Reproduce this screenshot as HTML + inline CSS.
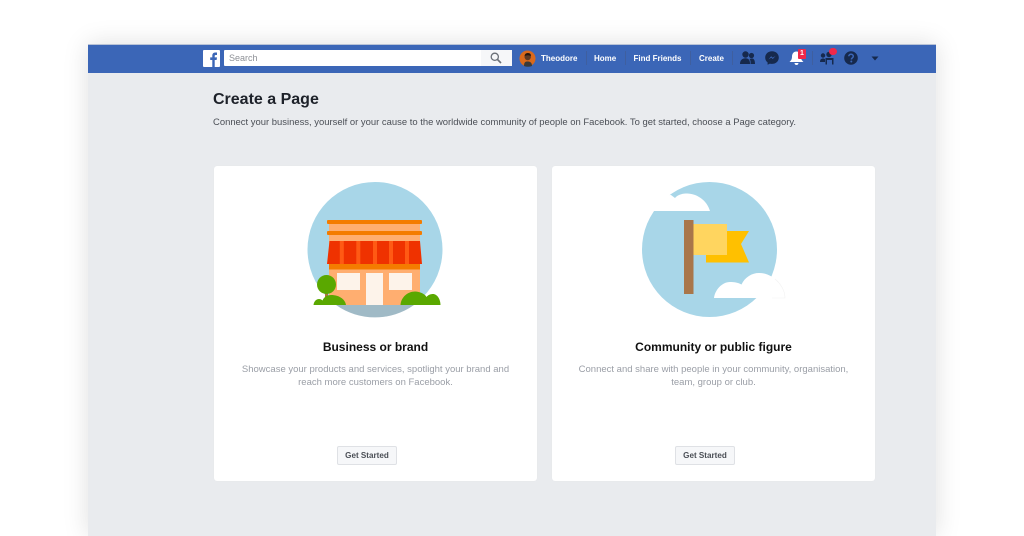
<!DOCTYPE html>
<html><head><meta charset="utf-8"><style>
html,body{margin:0;padding:0;background:#fff;width:1024px;height:536px;overflow:hidden}
body{position:relative;font-family:"Liberation Sans",Arial,sans-serif}
#all{position:absolute;left:0;top:0;width:1024px;height:536px;filter:blur(.35px)}
.abs,.t{position:absolute}
.t{white-space:nowrap}
#win{position:absolute;left:88px;top:44px;width:848px;height:492px;background:#e9ebee;box-shadow:0 0 24px rgba(0,0,0,.13)}
#bar{position:absolute;left:88px;top:44px;width:848px;height:29px;background:#3b66b7;border-top:1px solid #b9c3d6;box-sizing:border-box}
.nav{font-size:8px;font-weight:bold;color:#fff;top:53.500px;line-height:10px}
.sep{position:absolute;top:51px;width:1px;height:14px;background:#3f5f9f}
.card{position:absolute;top:166px;width:323px;height:315px;background:#fff;border-radius:3px;box-shadow:0 0 1px rgba(0,0,0,.06)}
.h{font-size:12px;font-weight:bold;color:#111;text-align:center;top:339.500px;line-height:14px}
.d{font-size:9.500px;color:#9a9ea6;text-align:center;line-height:13.500px;top:362.500px}
.b{position:absolute;top:446px;width:60px;height:19px;box-sizing:border-box;background:#f6f7f9;border:1px solid #dfe1e5;border-radius:2px;font-size:8.100px;font-weight:bold;color:#4b4f56;text-align:center;line-height:17px}
</style></head><body><div id="all">
<div id="win"></div>
<div id="bar"></div>

<div class="abs" style="left:203px;top:50px;width:17px;height:17px;background:#fff;border-radius:1px"></div>
<svg class="abs" style="left:203px;top:50px" width="17" height="17" viewBox="0 0 17 17"><path d="M9.300 17V10H7.200V7.400H9.300V5.600C9.300 3.500 10.600 2.500 12.400 2.500H14V5H12.800C11.900 5 11.700 5.400 11.700 6V7.400H14L13.600 10H11.700V17Z" fill="#3b66b7"/></svg>
<div class="abs" style="left:224px;top:50px;width:288px;height:16px;background:#fff;border-radius:1px"></div>
<div class="abs" style="left:481px;top:50px;width:31px;height:16px;background:#f6f7f9"></div>
<div class="t" style="left:229px;top:53px;font-size:9px;line-height:11px;color:#8d9096">Search</div>
<svg class="abs" style="left:490px;top:52px" width="12" height="12" viewBox="0 0 12 12"><circle cx="4.800" cy="4.800" r="3.600" fill="none" stroke="#6b7078" stroke-width="1.300"/><path d="M7.500 7.500L11 11" stroke="#6b7078" stroke-width="1.600"/></svg>

<svg class="abs" style="left:519px;top:50px" width="17" height="17" viewBox="0 0 17 17"><circle cx="8.500" cy="8.500" r="8" fill="#d9691c"/><path d="M5 16C5 12 6.500 11.500 8.500 11.500S13 12 13 16Q8.500 17.500 5 16Z" fill="#3a3a3a"/><circle cx="8.700" cy="7" r="3.200" fill="#5f3a24"/><path d="M5.500 6Q6 2.800 9 3Q12 3 12 6Q9 4.500 5.500 6Z" fill="#22160f"/></svg>

<div class="t nav" style="left:541px">Theodore</div>
<div class="sep" style="left:586px"></div>
<div class="t nav" style="left:594px">Home</div>
<div class="sep" style="left:625px"></div>
<div class="t nav" style="left:633.500px">Find Friends</div>
<div class="sep" style="left:690px"></div>
<div class="t nav" style="left:699px">Create</div>
<div class="sep" style="left:732px"></div>
<div class="sep" style="left:812px"></div>

<svg class="abs" style="left:740px;top:51px" width="15" height="14" viewBox="0 0 15 14" fill="#16294d"><circle cx="5.500" cy="3.500" r="3.200"/><circle cx="11.500" cy="4.500" r="2.600"/><path d="M0 13C0 9 2.500 7.300 5.500 7.300S10 9 10 13Z"/><path d="M10.500 13C10.800 10.500 10.500 9 9.500 8Q11 7.300 12.500 7.500C14 7.800 15 9.500 15 13Z"/></svg>
<svg class="abs" style="left:765px;top:51px" width="14" height="14" viewBox="0 0 14 14"><path d="M7 0.300C3.200 0.300 0.200 3 0.200 6.600C0.200 8.600 1.100 10.300 2.600 11.400V13.800L4.900 12.600C5.600 12.800 6.300 12.900 7 12.900C10.800 12.900 13.800 10.200 13.800 6.600S10.800 0.300 7 0.300Z" fill="#16294d"/><path d="M3.500 8.400L6.200 5.300L7.700 6.800L10.500 5L7.800 8L6.300 6.600Z" fill="#3b66b7"/></svg>
<svg class="abs" style="left:789px;top:50px" width="15" height="16" viewBox="0 0 15 16" fill="#fff"><path d="M7.500 1.500C4.500 1.500 3 3.800 3 6.500C3 9.500 2 10.500 0.500 12H14.500C13 10.500 12 9.500 12 6.500C12 3.800 10.500 1.500 7.500 1.500Z"/><path d="M5.500 13H9.500C9.300 14.500 8.500 15 7.500 15S5.700 14.500 5.500 13Z"/></svg>
<div class="abs" style="left:798px;top:49px;width:8px;height:10px;background:#f02849;border-radius:1px;color:#fff;font-size:7px;font-weight:bold;line-height:10px;text-align:center">1</div>
<svg class="abs" style="left:820px;top:51px" width="14" height="14" viewBox="0 0 14 14" fill="#16294d"><circle cx="3" cy="4.500" r="2.200"/><path d="M0 11C0 8.500 1.200 7.500 3 7.500C4 7.500 4.600 7.800 5 8.300V11Z"/><circle cx="9" cy="3.500" r="2.700"/><path d="M5.500 7H13.500V13.500H12V9H7V13.500H5.500Z"/></svg>
<div class="abs" style="left:829px;top:47.500px;width:7.500px;height:7.500px;border-radius:50%;background:#f02849"></div>
<svg class="abs" style="left:844px;top:51px" width="14" height="14" viewBox="0 0 14 14"><circle cx="7" cy="7" r="6.800" fill="#16294d"/><path d="M4.800 5.300C4.800 4 5.800 3.300 7 3.300S9.300 4 9.300 5.300C9.300 6.800 7.400 6.900 7.400 8.500" fill="none" stroke="#3b66b7" stroke-width="1.500"/><circle cx="7.300" cy="10.500" r="1" fill="#3b66b7"/></svg>
<svg class="abs" style="left:871px;top:56px" width="8" height="5" viewBox="0 0 8 5"><path d="M0.500 0.500H7.500L4 4.500Z" fill="#16294d"/></svg>

<div class="t" style="left:213px;top:90.500px;font-size:16px;font-weight:bold;color:#1d2129;line-height:18px">Create a Page</div>
<div class="t" style="left:213px;top:117px;font-size:9.450px;color:#4b4f56;line-height:12px">Connect your business, yourself or your cause to the worldwide community of people on Facebook. To get started, choose a Page category.</div>

<div class="card" style="left:214px"></div>
<div class="card" style="left:552px"></div>

<svg class="abs" style="left:300px;top:175px" width="150" height="150" viewBox="300 175 150 150">
<circle cx="375" cy="249.500" r="67.500" fill="#a8d6e8"/>
<path d="M336 305H414A67.500 67.500 0 0 1 336 305Z" fill="#a0bac6"/>
<rect x="329" y="224" width="91" height="81" fill="#ffae70"/>
<rect x="327" y="220" width="95" height="4" rx="1" fill="#f47c00"/>
<rect x="327" y="231" width="95" height="4" rx="1" fill="#f47c00"/>
<path d="M329.500 241H420L422 264H327Z" fill="#ef3200"/>
<path d="M339.800 241h4v23h-4zM356.300 241h4v23h-4zM373 241h4v23h-4zM389 241h4v23h-4zM405 241h4v23h-4z" fill="#ff5a14"/>
<rect x="329" y="264" width="91" height="5.500" fill="#f47c00"/>
<rect x="337" y="273" width="23" height="17" fill="#fdf3ea"/>
<rect x="366" y="273" width="17" height="32" fill="#fdf3ea"/>
<rect x="389" y="273" width="23" height="17" fill="#fdf3ea"/>
<rect x="325" y="292" width="3" height="10" fill="#a9743f"/>
<circle cx="326.500" cy="284.500" r="9.500" fill="#5aa800"/>
<path d="M313.500 305C314 301 316.500 299 319 299C320.500 299 321.500 299.500 322.500 300.500C324 296.500 328 295 331 295C340 295 345.500 300 346 305Z" fill="#5aa800"/>
<path d="M400.500 305C401 297 408 291.500 415 291.500C420 291.500 425 294 426.500 297C428 295 430.500 294 433 294C437 294 440.500 299 440.500 305Z" fill="#5aa800"/>
</svg>

<svg class="abs" style="left:630px;top:175px" width="160" height="150" viewBox="630 175 160 150">
<circle cx="709.500" cy="249.500" r="67.500" fill="#a8d6e8"/>
<path d="M642 211H710C707 200 696 193 686 193.500C681 193.700 677 195.500 675 198L671 195L650 196Z" fill="#fff"/>
<rect x="684" y="220" width="9.500" height="74" fill="#a9764a"/>
<path d="M706 250H727V231H749L741 244L749 262.500H706Z" fill="#ffc000"/>
<rect x="693.500" y="224" width="33.500" height="31" fill="#ffd55f"/>
<path d="M714 298C715 290 722 282 730 282C734 282 738 282.500 741.500 284.500C745 277 752 273 759 273C772 273 785 285 785 298Z" fill="#fff"/>
<path d="M772 298H785C785 291 781 284 775 279" fill="none" stroke="#f2f2f2" stroke-width=".6"/>
</svg>

<div class="t h" style="left:214px;width:323px">Business or brand</div>
<div class="t d" style="left:214px;width:323px">Showcase your products and services, spotlight your brand and<br>reach more customers on Facebook.</div>
<div class="b" style="left:337px">Get Started</div>

<div class="t h" style="left:552px;width:323px">Community or public figure</div>
<div class="t d" style="left:552px;width:323px">Connect and share with people in your community, organisation,<br>team, group or club.</div>
<div class="b" style="left:675px">Get Started</div>
</div></body></html>
